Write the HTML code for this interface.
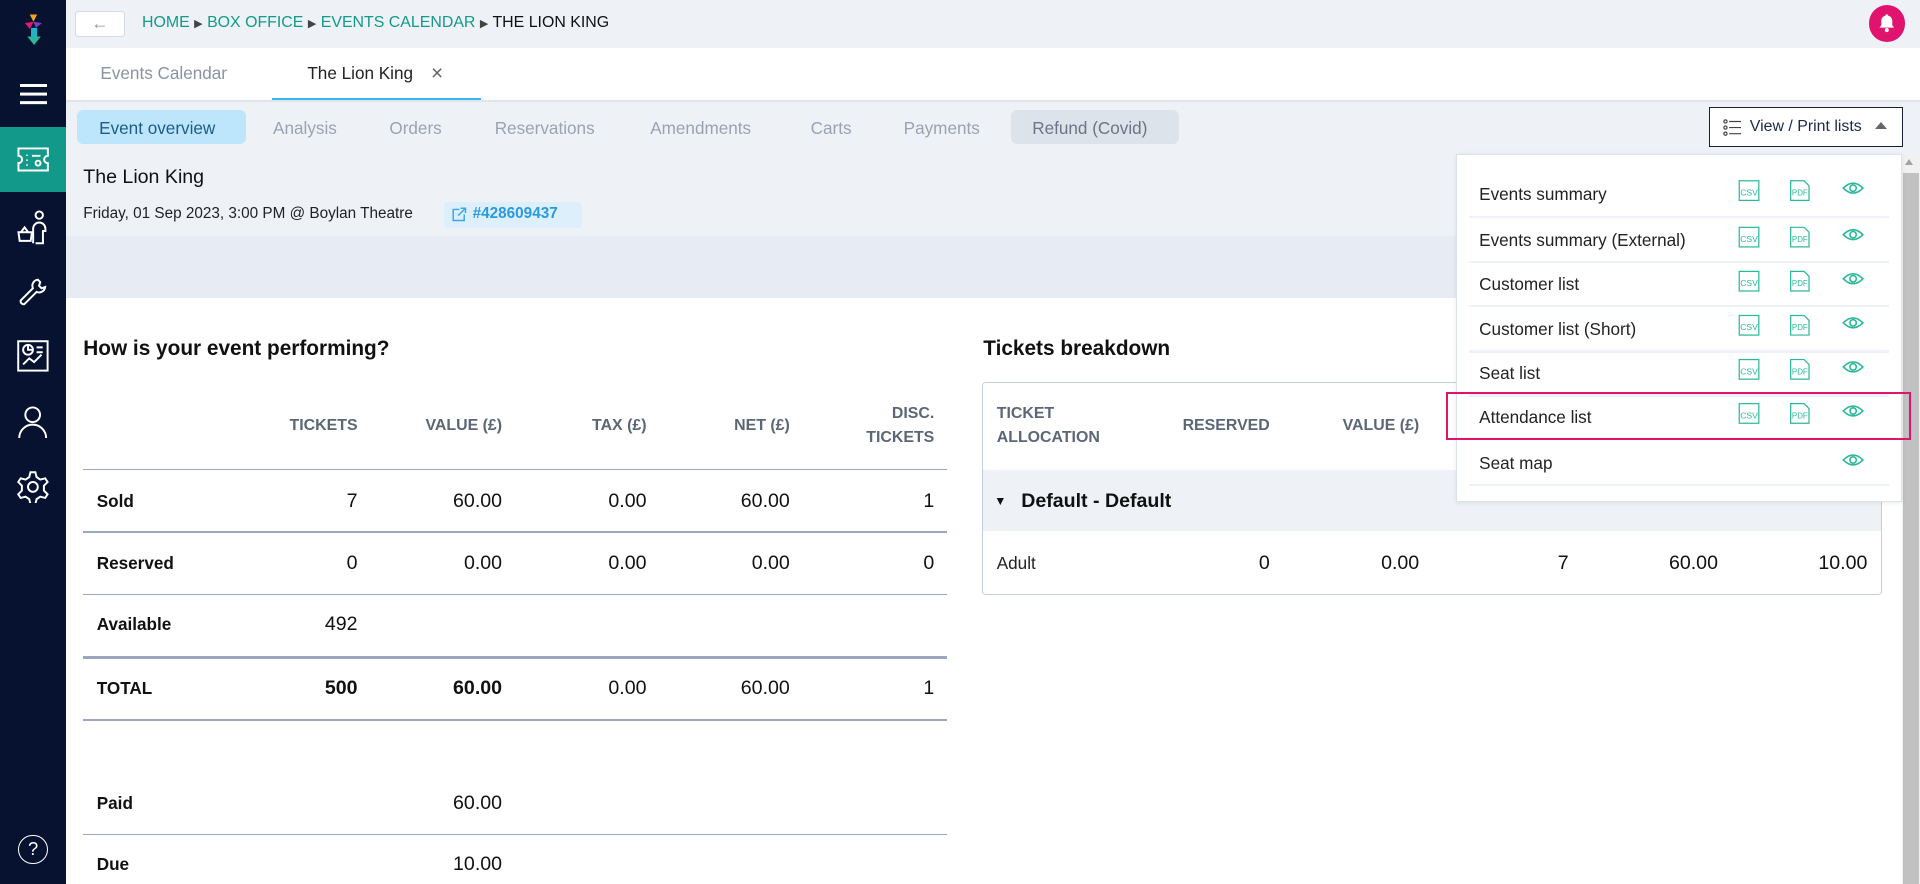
<!DOCTYPE html>
<html><head><meta charset="utf-8"><style>
html{zoom:1.22449}
*{box-sizing:border-box;margin:0;padding:0}
body{width:1568px;height:722px;overflow:hidden;position:relative;background:#fff;font-family:"Liberation Sans",sans-serif;color:#111}
.a{position:absolute}
.t{position:absolute;line-height:20px;margin-top:-10px;white-space:nowrap}
.r{text-align:right}
.hd{font-size:13px;color:#5b6677;font-weight:bold}
.num{font-size:16px;color:#111}
.lbl{font-size:14px;font-weight:bold;color:#111}
.line{position:absolute;height:1px;background:#9aa7bd}
.sep{position:absolute;left:1200px;width:343px;height:2px;background:#eef1f5}
.dd{font-size:14px;color:#222}
</style></head><body>
<div class="a" style="left:0;top:0;width:54px;height:722px;background:#06122f"></div>
<div class="a" style="left:0;top:104px;width:54px;height:53px;background:#13998a"></div>
<svg class="a" style="left:16px;top:10px" width="22" height="30" viewBox="0 0 22 30"><polygon points="8,2 14,2 11,8" fill="#f7a21b"/><polygon points="4,9 11,8 8,14" fill="#e4176f"/><polygon points="11,8 18,9 13,13" fill="#7a3fc0"/><rect x="9" y="13" width="5" height="8" fill="#1fb3c7"/><polygon points="6,20 17,20 11.5,27" fill="#2cb59b"/></svg>
<div class="a" style="left:16px;top:69px;width:22px;height:2px;background:#fff;box-shadow:0 7px 0 #fff,0 14px 0 #fff"></div>
<svg class="a" style="left:13px;top:119px" width="28" height="22" viewBox="0 0 28 22" fill="none" stroke="#fff" stroke-width="1.6"><path d="M2 2h24v6a3 3 0 0 0 0 6v6H2v-6a3 3 0 0 0 0-6z"/><path d="M9 7v1M9 11v1M9 15v1M13 8h7"/><circle cx="18" cy="14" r="2"/></svg>
<svg class="a" style="left:13px;top:171px" width="28" height="30" viewBox="0 0 28 30" fill="none" stroke="#fff" stroke-width="1.6"><circle cx="19" cy="5" r="3"/><path d="M14 28V16a5 5 0 0 1 10 0v2h-2v10h-6"/><path d="M2 19h11l-1 7H3zM4 19l3-4 3 4"/></svg>
<svg class="a" style="left:14px;top:225px" width="26" height="26" viewBox="0 0 26 26" fill="none" stroke="#fff" stroke-width="1.6"><path d="M17 3a5 5 0 0 0-4 7L3 20a2.5 2.5 0 0 0 3 3l10-10a5 5 0 0 0 7-4l-3 1-2-2 1-3z"/></svg>
<svg class="a" style="left:14px;top:278px" width="26" height="26" viewBox="0 0 26 26" fill="none" stroke="#fff" stroke-width="1.6"><rect x="1" y="1" width="24" height="24"/><circle cx="9" cy="8" r="4"/><path d="M9 4v4h4M16 6h5M16 10h5M5 20l5-5 4 3 6-6"/></svg>
<svg class="a" style="left:15px;top:331px" width="24" height="28" viewBox="0 0 24 28" fill="none" stroke="#fff" stroke-width="1.6"><circle cx="12" cy="8" r="6"/><path d="M1 27a11 11 0 0 1 22 0"/></svg>
<svg class="a" style="left:14px;top:385px" width="26" height="26" viewBox="0 0 26 26" fill="none" stroke="#fff" stroke-width="1.6"><path d="M11 1h4l1 4 3 2 4-1 2 3-3 3v4l3 3-2 3-4-1-3 2-1 4h-4l-1-4-3-2-4 1-2-3 3-3v-4L1 9l2-3 4 1 3-2z"/><circle cx="13" cy="13" r="4"/></svg>
<div class="a" style="left:15px;top:682px;width:24px;height:24px;border:1.6px solid #fff;border-radius:50%;color:#fff;font-size:15px;text-align:center;line-height:21px">?</div>
<div class="a" style="left:54px;top:0;width:1514px;height:39px;background:#eef2f7"></div>
<div class="a" style="left:61px;top:9px;width:41px;height:21px;background:#fff;border:1px solid #d4dae3;border-radius:3px;color:#8a93a3;font-size:14px;text-align:center;line-height:18px">←</div>
<div class="t" style="left:116px;top:19px;font-size:13px;color:#139a8a">HOME <span style="color:#444;font-size:9px">▶</span> BOX OFFICE <span style="color:#444;font-size:9px">▶</span> EVENTS CALENDAR <span style="color:#444;font-size:9px">▶</span> <span style="color:#111">THE LION KING</span></div>
<div class="a" style="left:1526px;top:4px;width:30px;height:30px;border-radius:50%;background:#e0146f"></div>
<svg class="a" style="left:1533px;top:11px" width="16" height="16" viewBox="0 0 16 16"><path d="M8 1a1 1 0 0 1 1 1 4.5 4.5 0 0 1 3.5 4.5v3.5l1.5 2H2l1.5-2V6.5A4.5 4.5 0 0 1 7 2a1 1 0 0 1 1-1z" fill="#fff"/><circle cx="8" cy="14" r="1.6" fill="#fff"/></svg>
<div class="a" style="left:54px;top:82px;width:1514px;height:1px;background:#dfe4ec"></div>
<div class="t" style="left:82px;top:60px;font-size:14px;color:#8a93a3">Events Calendar</div>
<div class="t" style="left:251px;top:60px;font-size:14px;color:#222">The Lion King</div>
<div class="t" style="left:352px;top:61px;font-size:17px;color:#666">×</div>
<div class="a" style="left:222px;top:80px;width:171px;height:2px;background:#3ab8f0"></div>
<div class="a" style="left:54px;top:83px;width:1514px;height:110px;background:#eef2f7"></div>
<div class="a" style="left:54px;top:193px;width:1514px;height:50px;background:#e7ecf4"></div>
<div class="a" style="left:63px;top:90px;width:138px;height:28px;background:#bde5fb;border-radius:5px"></div>
<div class="t" style="left:81px;top:105px;font-size:14px;color:#1e5c88">Event overview</div>
<div class="t" style="left:223px;top:105px;font-size:14px;color:#9aa3b1">Analysis</div>
<div class="t" style="left:318px;top:105px;font-size:14px;color:#9aa3b1">Orders</div>
<div class="t" style="left:404px;top:105px;font-size:14px;color:#9aa3b1">Reservations</div>
<div class="t" style="left:531px;top:105px;font-size:14px;color:#9aa3b1">Amendments</div>
<div class="t" style="left:662px;top:105px;font-size:14px;color:#9aa3b1">Carts</div>
<div class="t" style="left:738px;top:105px;font-size:14px;color:#9aa3b1">Payments</div>
<div class="a" style="left:826px;top:90px;width:137px;height:28px;background:#dde3ea;border-radius:5px"></div>
<div class="t" style="left:843px;top:105px;font-size:14px;color:#6b7585">Refund (Covid)</div>
<div class="a" style="left:1396px;top:87px;width:158px;height:33px;background:#fff;border:1px solid #1a2030"></div>
<svg class="a" style="left:1407px;top:97px" width="15" height="14" viewBox="0 0 15 14" fill="none" stroke="#444" stroke-width="1"><circle cx="2" cy="2" r="1.3"/><circle cx="2" cy="7" r="1.3"/><circle cx="2" cy="12" r="1.3"/><path d="M5 2h10M5 7h10M5 12h10"/></svg>
<div class="t" style="left:1429px;top:104px;font-size:13px;color:#1a2a4a">View / Print lists</div>
<div class="a" style="left:1531px;top:100px;width:0;height:0;border-left:5px solid transparent;border-right:5px solid transparent;border-bottom:6px solid #666"></div>
<div class="t" style="left:68px;top:145px;font-size:16px;color:#111">The Lion King</div>
<div class="t" style="left:68px;top:175px;font-size:12.5px;color:#222">Friday, 01 Sep 2023, 3:00 PM @ Boylan Theatre</div>
<div class="a" style="left:363px;top:165px;width:112px;height:21px;background:#dceffb;border-radius:3px"></div>
<svg class="a" style="left:369px;top:169px" width="12" height="12" viewBox="0 0 12 12" fill="none" stroke="#3aa8e8" stroke-width="1.2"><path d="M6 2H1v9h9V6M7 1h4v4M11 1 5 7"/></svg>
<div class="t" style="left:386px;top:175px;font-size:12.5px;color:#2a9ae0;font-weight:bold">#428609437</div>
<div class="t" style="left:68px;top:285px;font-size:17px;color:#111;font-weight:bold">How is your event performing?</div>
<div class="t hd r" style="right:1276px;top:348px">TICKETS</div>
<div class="t hd r" style="right:1158px;top:348px">VALUE (£)</div>
<div class="t hd r" style="right:1040px;top:348px">TAX (£)</div>
<div class="t hd r" style="right:923px;top:348px">NET (£)</div>
<div class="t hd r" style="right:805px;top:338px">DISC.</div>
<div class="t hd r" style="right:805px;top:358px">TICKETS</div>
<div class="line" style="left:68px;top:383px;width:705px"></div>
<div class="t lbl" style="left:79px;top:409px">Sold</div>
<div class="t num r" style="right:1276px;top:409px">7</div><div class="t num r" style="right:1158px;top:409px">60.00</div><div class="t num r" style="right:1040px;top:409px">0.00</div><div class="t num r" style="right:923px;top:409px">60.00</div><div class="t num r" style="right:805px;top:409px">1</div>
<div class="line" style="left:68px;top:434px;width:705px"></div>
<div class="t lbl" style="left:79px;top:460px">Reserved</div>
<div class="t num r" style="right:1276px;top:460px">0</div><div class="t num r" style="right:1158px;top:460px">0.00</div><div class="t num r" style="right:1040px;top:460px">0.00</div><div class="t num r" style="right:923px;top:460px">0.00</div><div class="t num r" style="right:805px;top:460px">0</div>
<div class="line" style="left:68px;top:485px;width:705px"></div>
<div class="t lbl" style="left:79px;top:510px">Available</div>
<div class="t num r" style="right:1276px;top:510px">492</div>
<div class="line" style="left:68px;top:536px;width:705px;height:2px"></div>
<div class="t lbl" style="left:79px;top:562px">TOTAL</div>
<div class="t num r" style="right:1276px;top:562px;font-weight:bold">500</div><div class="t num r" style="right:1158px;top:562px;font-weight:bold">60.00</div><div class="t num r" style="right:1040px;top:562px">0.00</div><div class="t num r" style="right:923px;top:562px">60.00</div><div class="t num r" style="right:805px;top:562px">1</div>
<div class="line" style="left:68px;top:587px;width:705px;height:2px"></div>
<div class="t lbl" style="left:79px;top:656px">Paid</div>
<div class="t num r" style="right:1158px;top:656px">60.00</div>
<div class="line" style="left:68px;top:681px;width:705px"></div>
<div class="t lbl" style="left:79px;top:706px">Due</div>
<div class="t num r" style="right:1158px;top:706px">10.00</div>
<div class="t" style="left:803px;top:285px;font-size:17px;color:#111;font-weight:bold">Tickets breakdown</div>
<div class="a" style="left:802px;top:312px;width:735px;height:174px;border:1px solid #c5cdd8;border-radius:3px"></div>
<div class="t hd" style="left:814px;top:338px">TICKET</div>
<div class="t hd" style="left:814px;top:358px">ALLOCATION</div>
<div class="t hd r" style="right:531px;top:348px">RESERVED</div>
<div class="t hd r" style="right:409px;top:348px">VALUE (£)</div>
<div class="a" style="left:803px;top:384px;width:733px;height:50px;background:#eef2f7"></div>
<div class="t" style="left:812px;top:409px;font-size:10px;color:#111">▼</div>
<div class="t" style="left:834px;top:409px;font-size:16px;font-weight:bold;color:#111">Default - Default</div>
<div class="t" style="left:814px;top:460px;font-size:14px;color:#222">Adult</div>
<div class="t num r" style="right:531px;top:460px">0</div><div class="t num r" style="right:409px;top:460px">0.00</div><div class="t num r" style="right:287px;top:460px">7</div><div class="t num r" style="right:165px;top:460px">60.00</div><div class="t num r" style="right:43px;top:460px">10.00</div>
<div class="a" style="left:1553px;top:126px;width:15px;height:596px;background:#f1f1f1"></div>
<div class="a" style="left:1554px;top:141px;width:13px;height:581px;background:#c1c1c1"></div>
<div class="a" style="left:1556px;top:130px;width:0;height:0;border-left:4px solid transparent;border-right:4px solid transparent;border-bottom:5px solid #a3a3a3"></div>
<div class="a" style="left:1189px;top:126px;width:364px;height:284px;background:#fff;border:1px solid #dde3ea;box-shadow:0 1px 4px rgba(0,0,0,.08)"></div>
<div class="sep" style="top:176px"></div><div class="sep" style="top:213px"></div><div class="sep" style="top:249px"></div><div class="sep" style="top:286px"></div><div class="sep" style="top:322px"></div><div class="sep" style="top:395px"></div>
<div class="t dd" style="left:1208px;top:159px">Events summary</div>
<div class="t dd" style="left:1208px;top:196px">Events summary (External)</div>
<div class="t dd" style="left:1208px;top:232px">Customer list</div>
<div class="t dd" style="left:1208px;top:269px">Customer list (Short)</div>
<div class="t dd" style="left:1208px;top:305px">Seat list</div>
<div class="t dd" style="left:1208px;top:341px">Attendance list</div>
<div class="t dd" style="left:1208px;top:378px">Seat map</div>
<svg class="a" style="left:1419px;top:140px" width="110" height="250" viewBox="0 0 110 250">
<defs>
<g id="c"><rect x="1" y="0" width="16" height="16" fill="none" stroke="#2ab89b" stroke-width="1"/><text x="9" y="12" font-size="7" fill="#2ab89b" text-anchor="middle" font-family="Liberation Sans">CSV</text></g>
<g id="p"><path d="M1 0h11l4 4v12H1z" fill="none" stroke="#2ab89b" stroke-width="1"/><text x="8.5" y="12" font-size="6.5" fill="#2ab89b" text-anchor="middle" font-family="Liberation Sans">PDF</text></g>
<g id="e"><path d="M1 8q8-8 16 0q-8 8-16 0z" fill="none" stroke="#2ab89b" stroke-width="1.3"/><circle cx="9" cy="8" r="2.6" fill="none" stroke="#2ab89b" stroke-width="1.3"/></g>
</defs>
<use href="#c" x="0" y="8"/><use href="#p" x="42" y="8"/><use href="#e" x="85" y="6"/>
<use href="#c" x="0" y="46"/><use href="#p" x="42" y="46"/><use href="#e" x="85" y="44"/>
<use href="#c" x="0" y="82"/><use href="#p" x="42" y="82"/><use href="#e" x="85" y="80"/>
<use href="#c" x="0" y="118"/><use href="#p" x="42" y="118"/><use href="#e" x="85" y="116"/>
<use href="#c" x="0" y="154"/><use href="#p" x="42" y="154"/><use href="#e" x="85" y="152"/>
<use href="#c" x="0" y="190"/><use href="#p" x="42" y="190"/><use href="#e" x="85" y="188"/>
<use href="#e" x="85" y="228"/>
</svg>
<div class="a" style="left:1181px;top:320px;width:380px;height:39px;border:2px solid #e0146f"></div>
</body></html>
